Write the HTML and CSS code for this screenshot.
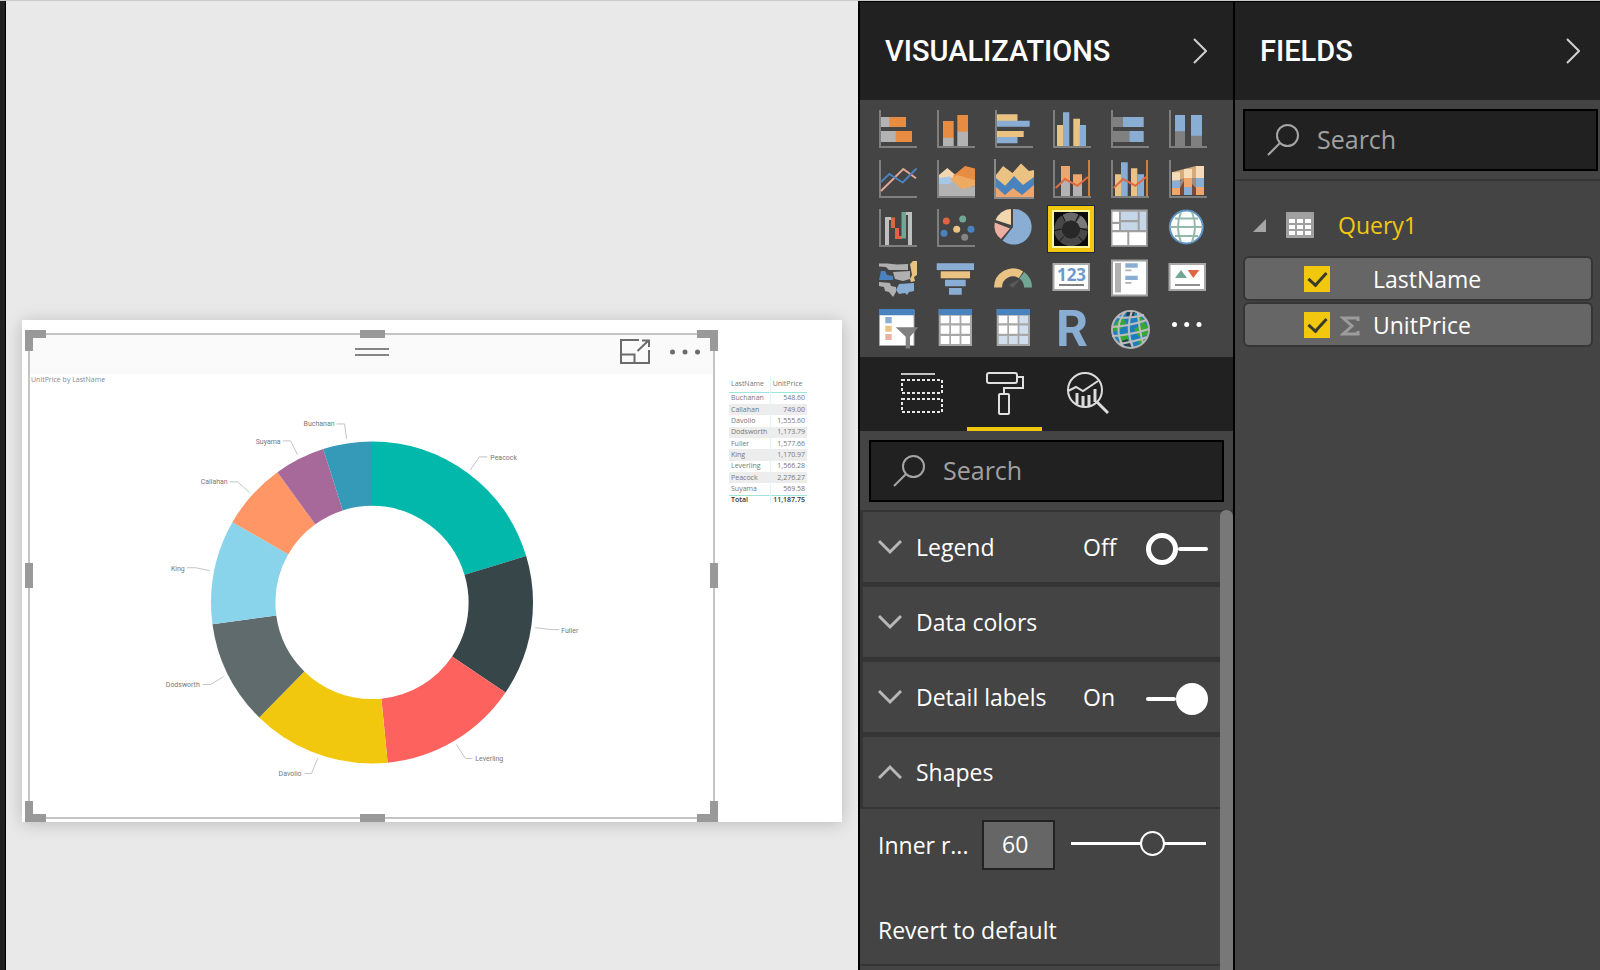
FILE: index.html
```html
<!DOCTYPE html>
<html lang="en">
<head>
<meta charset="utf-8">
<title>Report editor</title>
<link rel="stylesheet" href="styles.css">
</head>
<body>
<div class="app">
  <div class="rail"></div>

  <main class="canvas">
    <div class="sheet">
      <section class="visual">
        <i class="handle corner nw"></i><i class="handle corner ne"></i><i class="handle corner sw"></i><i class="handle corner se"></i>
        <i class="handle bar n"></i><i class="handle bar s"></i><i class="handle bar w"></i><i class="handle bar e"></i>
        <header class="visual-head">
          <button class="grip" aria-label="Move visual"></button>
          <div class="visual-tools">
            <button aria-label="Focus mode"><svg width="30" height="26" viewBox="0 0 30 26" fill="none" stroke="#6b6b6b" stroke-width="2"><path d="M19 1H1V24H29V11M1 15.500H14.500V24M17.500 12 28 2M22 1.500H29V8"/></svg></button>
            <button aria-label="More options"><svg width="30" height="6" viewBox="0 0 30 6" fill="#6b6b6b"><circle cx="2.500" cy="3" r="2.500"/><circle cx="15" cy="3" r="2.500"/><circle cx="27.500" cy="3" r="2.500"/></svg></button>
          </div>
        </header>
        <h3 class="visual-title">UnitPrice by LastName</h3>
        <svg class="donut" viewBox="0 0 684 430">
          <g class="slices" transform="rotate(-90 342.5 214.8)" fill="none" stroke-width="64.5">
            <circle cx="342.5" cy="214.8" r="129" pathLength="360" stroke="#01b8aa" stroke-dasharray="73.25 360"/>
            <circle cx="342.5" cy="214.8" r="129" pathLength="360" stroke="#374649" stroke-dasharray="50.77 360" stroke-dashoffset="-73.25"/>
            <circle cx="342.5" cy="214.8" r="129" pathLength="360" stroke="#fd625e" stroke-dasharray="50.4 360" stroke-dashoffset="-124.01"/>
            <circle cx="342.5" cy="214.8" r="129" pathLength="360" stroke="#f2c80f" stroke-dasharray="50.06 360" stroke-dashoffset="-174.41"/>
            <circle cx="342.5" cy="214.8" r="129" pathLength="360" stroke="#5f6b6d" stroke-dasharray="37.77 360" stroke-dashoffset="-224.47"/>
            <circle cx="342.5" cy="214.8" r="129" pathLength="360" stroke="#8ad4eb" stroke-dasharray="37.68 360" stroke-dashoffset="-262.24"/>
            <circle cx="342.5" cy="214.8" r="129" pathLength="360" stroke="#fe9666" stroke-dasharray="24.1 360" stroke-dashoffset="-299.92"/>
            <circle cx="342.5" cy="214.8" r="129" pathLength="360" stroke="#a66999" stroke-dasharray="18.33 360" stroke-dashoffset="-324.02"/>
            <circle cx="342.5" cy="214.8" r="129" pathLength="360" stroke="#3599b8" stroke-dasharray="17.65 360" stroke-dashoffset="-342.35"/>
          </g>
          <path class="leaders" d="M307 36H315L317 51M253 53H261L268 67M200 94H208L220 105M157 180H166L180 183M173 297H181L194 289M275 386H282L288 371M443 371H436L427 357M530 242H522L506 240M458 69H450L441 82"/>
          <g class="labels">
            <text x="461" y="72">Peacock</text><text x="532" y="245">Fuller</text><text x="446" y="374">Leverling</text>
            <g text-anchor="end"><text x="305" y="38">Buchanan</text><text x="251" y="56">Suyama</text><text x="198" y="96">Callahan</text><text x="155" y="183">King</text><text x="170" y="299">Dodsworth</text><text x="272" y="389">Davolio</text></g>
          </g>
        </svg>
      </section>
      <table class="data">
        <thead><tr><th>LastName</th><th>UnitPrice</th></tr></thead>
        <tbody>
          <tr><td>Buchanan</td><td>548.60</td></tr>
          <tr><td>Callahan</td><td>749.00</td></tr>
          <tr><td>Davolio</td><td>1,555.60</td></tr>
          <tr><td>Dodsworth</td><td>1,173.79</td></tr>
          <tr><td>Fuller</td><td>1,577.66</td></tr>
          <tr><td>King</td><td>1,170.97</td></tr>
          <tr><td>Leverling</td><td>1,566.28</td></tr>
          <tr><td>Peacock</td><td>2,276.27</td></tr>
          <tr><td>Suyama</td><td>569.58</td></tr>
        </tbody>
        <tfoot><tr><td>Total</td><td>11,187.75</td></tr></tfoot>
      </table>
    </div>
  </main>

  <aside class="pane">
    <header class="pane-head">
      <h2>VISUALIZATIONS</h2>
      <button aria-label="Collapse visualizations"><svg width="14" height="26" viewBox="0 0 14 26"><path d="M1 1 13 13 1 25" fill="none" stroke="#d0d0d0" stroke-width="2"/></svg></button>
    </header>

    <div class="gallery">
      <button aria-label="Stacked bar chart"><svg viewBox="0 0 40 40"><path class="axis" d="M3 1V38H40"/><path fill="#b3b3b3" d="M4 8h9v10H4zM4 22h15v11H4z"/><path fill="#e78c41" d="M12.300 8H29V18H12.300zM18.700 22H35V33H18.700z"/></svg></button>
      <button aria-label="Stacked column chart"><svg viewBox="0 0 40 40"><path class="axis" d="M3 1V38H40"/><path fill="#e78c41" d="M8 12h10.700v17H8zM22.300 6H33V23H22.300z"/><path fill="#b3b3b3" d="M8 28.700h10.700V37H8zM22.300 22.700H33V37H22.300z"/></svg></button>
      <button aria-label="Clustered bar chart"><svg viewBox="0 0 40 40"><path class="axis" d="M3 1V38H40"/><path fill="#eac282" d="M4 5.300H24.500V12H4zM4 22H30.700V28H4z"/><path fill="#8aadd3" d="M4 11.700H36.700V17.700H4zM4 28H24.500V34.300H4z"/></svg></button>
      <button aria-label="Clustered column chart"><svg viewBox="0 0 40 40"><path class="axis" d="M3 1V38H40"/><path fill="#eac282" d="M6 16h6V37H6zM22.300 9.700H29V37H22.300z"/><path fill="#8aadd3" d="M12 3.300h6.300V37H12zM28.700 16H35V37H28.700z"/></svg></button>
      <button aria-label="100% stacked bar chart"><svg viewBox="0 0 40 40"><path class="axis" d="M3 1V38H40"/><path fill="#808080" d="M4 8H14V18H4zM4 22H20.300V33H4z"/><path fill="#8aadd3" d="M14 8H34.700V18H14zM20.300 22H34.700V33H20.300z"/></svg></button>
      <button aria-label="100% stacked column chart"><svg viewBox="0 0 40 40"><path class="axis" d="M3 1V38H40"/><path fill="#808080" d="M8 22H18V37H8zM24 26H35V37H24z"/><path fill="#8aadd3" d="M8 6H18V22.300H8zM24 6H35V26.700H24z"/></svg></button>

      <button aria-label="Line chart"><svg viewBox="0 0 40 40"><path class="axis" d="M3 1V38H40"/><path fill="none" stroke="#e2a797" stroke-width="2" d="M4 32 26.300 10 39 19.300"/><path fill="none" stroke="#4a82bd" stroke-width="2" d="M4 23 12.300 15 25.700 23.500 39.500 9.500"/></svg></button>
      <button aria-label="Area chart"><svg viewBox="0 0 40 40"><path class="axis" d="M3 1V38H40"/><path fill="#f0d7b0" d="M4 16 12.300 9 24 19 20 26H4z"/><path fill="#a5c8e8" d="M4 19 15 17.500 22 24 4 26z"/><path fill="#b3b3b3" d="M4 25H14L20 20 27 29 40 27V37H4z"/><path fill="#e78c41" d="M18 17 30 7 40 9.500V22L27 30z"/><path fill="#eeaa63" d="M15 20 22 16 40 21V27L27 30z"/></svg></button>
      <button aria-label="Stacked area chart"><svg viewBox="0 0 40 40"><path fill="none" stroke="#8a8a8a" stroke-width="2" d="M2 0V39H41"/><path fill="#eac282" d="M3 16 10 7 19.500 14 28 4.500 36 12 41 11V24L30 27H12L3 20z"/><path fill="#4a82bd" d="M3 19 12 27 21 17 30 26 41 18V30L30 36H12L3 30z"/><path fill="#eea66d" d="M3 28 12 36 20 29 29 36 41 26V38H3z"/></svg></button>
      <button aria-label="Line and stacked column chart"><svg viewBox="0 0 40 40"><path class="axis" d="M3 1V38H40"/><path fill="#eea66d" d="M10 7h9V25h-9zM22 15.300h9V28h-9z"/><path fill="#b3b3b3" d="M10 24l5-3 4 2V37h-9zM22 26l5 2 4-3V37h-9z"/><path stroke="#cd7f3c" stroke-width="2" d="M38 1V37"/><path fill="none" stroke="#df6c42" stroke-width="2" d="M4.700 29 14 20 26.300 26.700 37 18"/></svg></button>
      <button aria-label="Line and clustered column chart"><svg viewBox="0 0 40 40"><path class="axis" d="M3 1V38H40"/><path fill="#eac282" d="M6 15.300h6V37H6zM22 9.300h6.300V37H22z"/><path fill="#8aadd3" d="M12 3.300h6.700V37H12zM28.300 15.300H35V37H28.300z"/><path stroke="#cd7f3c" stroke-width="2" d="M38 1V37"/><path fill="none" stroke="#df6c42" stroke-width="2" d="M4.700 29 14 20 26.300 26.700 37 18"/></svg></button>
      <button aria-label="Ribbon chart"><svg viewBox="0 0 40 40"><path class="axis" d="M3 1V38H40"/><path fill="#d6ab7c" d="M5 13.300 17 10 29 7h8V19H25L5 22z"/><path fill="#9a8a86" d="M13 22 17 19h12v9l-4 8H13z"/><path fill="#7a4a38" d="M13 29 17 22v14h-4zM25 25l4 4v7h-4z"/><path fill="#f5dcb8" d="M5 13.300h8v8.400H5zM17 10h8v9h-8zM29 7h8v12h-8z"/><path fill="#8aadd3" d="M5 21.700h8V29H5zM17 28h8v8h-8zM29 19h8v9h-8z"/><path fill="#eea66d" d="M5 29h8v7H5zM17 19h8v9h-8zM29 28h8v8h-8z"/></svg></button>

      <button aria-label="Waterfall chart"><svg viewBox="0 0 40 40"><path class="axis" d="M3 0V37H40"/><path fill="#c0c0c0" d="M8 8h6v3h-2V36H8zM29 3h6V36h-4V6h-2z"/><path fill="#df6444" d="M14 8.500h4V19h4v8h3v3h-7V19h-4z"/><path fill="#71a695" d="M24.500 3H29V29.500H24.500z"/></svg></button>
      <button aria-label="Scatter chart"><svg viewBox="0 0 40 40"><path class="axis" d="M3 0V37H40"/><circle cx="11.300" cy="12" r="3.500" fill="#df6444"/><circle cx="27.700" cy="10" r="3.500" fill="#71a695"/><circle cx="21.700" cy="20.300" r="3.500" fill="#eac282"/><circle cx="9" cy="24.300" r="3.500" fill="#4a82bd"/><circle cx="36" cy="20.300" r="3.500" fill="#4a82bd"/><circle cx="29.700" cy="28.300" r="3.500" fill="#858585"/></svg></button>
      <button aria-label="Pie chart"><svg viewBox="0 0 40 40"><path fill="#8aadd3" d="M20 0A17.800 17.800 0 1 1 9.500 31.500L20 18z"/><path fill="#f0d7b0" d="M18 0V16L2.500 11A17 17 0 0 1 18 0z"/><path fill="#ecb0a2" d="M1.700 13.500 17 19.500 8 30A17 17 0 0 1 1.700 13.500z"/></svg></button>
      <button class="selected" aria-label="Donut chart" aria-pressed="true"><svg viewBox="2 1 36 36"><path fill="#0c0c0e" d="M2 1H38V38H2z"/><circle cx="20" cy="19.500" r="13.500" fill="none" stroke="#484848" stroke-width="8.500"/><path fill="none" stroke="#686868" stroke-width="8.500" d="M12.500 8.200A13.500 13.500 0 0 1 26 7.400"/><path fill="none" stroke="#7a7a7a" stroke-width="8.500" d="M28 8.500A13.500 13.500 0 0 1 33.400 18"/><circle cx="20" cy="19.500" r="9.500" fill="#282828"/><path stroke="#0c0c0e" d="M10 3 14 11M29 3 25 11M29 18 39 21M28 27 34 34M12 27 6 34M10 19 1 21"/></svg></button>
      <button aria-label="Treemap"><svg viewBox="0 0 40 40"><path fill="#a0a0a0" d="M2 .5H38.700V37.700H2z"/><path fill="#fff" d="M3.500 2.700H10V12.700H3.500zM3.500 15H10V21H3.500zM3.500 23.300H18.300V36H3.500zM20.300 23.300H37V36H20.300z"/><path fill="#c5d6e9" d="M12 2.700H28.700V11H12zM12 13.300H28.700V21H12zM30.700 2.700H37V21H30.700z"/></svg></button>
      <button aria-label="Map"><svg viewBox="0 0 40 40"><circle cx="19.300" cy="18" r="16.500" fill="#fff" stroke="#5c92c4" stroke-width="2"/><path fill="none" stroke="#94b9ab" stroke-width="2" d="M3 18H36M8 9.500H31M8 27H31M14 3Q8 18 14 33M25 3Q31 18 25 33"/></svg></button>

      <button aria-label="Filled map"><svg viewBox="0 0 40 40"><path fill="#b0b0b0" d="M2 4.500H10L20 5.500 31 5V11H12L9 8 2 7.500zM16 13 33 12V20L26 22 18 20zM2 23 13 24 14 27 19 28V33L16 38 12 33 8 32 7 28 2 27z"/><path fill="#4a82bd" d="M2 21 4 12 8 12 10 16 16 17V21z"/><path fill="#eac282" d="M33 5 36 2 40 2V16L37 18 38 22 34 23 33 20 35 16z"/><path fill="#8aadd3" d="M22 25 37 24V32L32 33 30 36 28 34 22 35 19 31z"/></svg></button>
      <button aria-label="Funnel"><svg viewBox="0 0 40 40"><path fill="#8aadd3" d="M1.700 4.300H39V11H1.700zM10 20.700H30.700V27.300H10zM14 29H26.700V35.700H14z"/><path fill="#eac282" d="M5.700 12.300H35V19.300H5.700z"/></svg></button>
      <button aria-label="Gauge"><svg viewBox="0 0 40 40"><g fill="none" stroke-width="8"><path stroke="#eac282" d="M5 28.500A15 15 0 0 1 28 15.800"/><path stroke="#71a695" d="M28.800 16.300A15 15 0 0 1 35 28.500"/></g><path fill="#5a5a5a" d="M16 26 27 20 20 29z"/></svg></button>
      <button aria-label="Card"><svg viewBox="0 0 40 40"><path fill="#fff" stroke="#a8a8a8" stroke-width="2" d="M2.500 5H38V31H2.500z"/><text class="card-num" x="20.500" y="21.500">123</text><path stroke="#808080" stroke-width="2" d="M8 26H33"/></svg></button>
      <button aria-label="Multi-row card"><svg viewBox="0 0 40 40"><path fill="#fff" stroke="#a0a0a0" stroke-width="2" d="M3 1.500H38V36.500H3z"/><path fill="#b0b0b0" d="M6 4h6V33.500H6zM16.300 10.500h6.200v1.800h-6.200zM16.300 23h6.200v1.800h-6.200z"/><path fill="#8aadd3" d="M16.300 4.300H28.700V8.700H16.300zM16.300 16.700H28.700V21H16.300z"/></svg></button>
      <button aria-label="KPI"><svg viewBox="0 0 40 40"><path fill="#fff" stroke="#a8a8a8" stroke-width="2" d="M2.500 5H38V31H2.500z"/><path fill="#71a695" d="M8 19 14 11 20 19z"/><path fill="#df6444" d="M20.700 11H32.300L26.300 19z"/><path stroke="#909090" stroke-width="2" d="M8 26H33"/></svg></button>

      <button aria-label="Slicer"><svg viewBox="0 0 40 40"><path fill="#fff" stroke="#a8a8a8" d="M2.500 1H37V36.500H2.500z"/><path fill="#4a82bd" d="M2 0H37.300V6.300H2z"/><path fill="#8aadd3" d="M8.300 8h6.400v6.300H8.300z"/><path fill="#eac282" d="M8.300 16.700h6.400v6H8.300z"/><path fill="#ecb0a2" d="M8.300 25h6.400v6H8.300z"/><path fill="#808080" d="M18.700 18.300H41.300L33 27.700V39.500H28.700V27.700z"/></svg></button>
      <button aria-label="Table"><svg viewBox="0 0 40 40"><path fill="#a8a8a8" d="M3.700 0H37V37H3.700z"/><path fill="#4a82bd" d="M3.700 0H37V6H3.700z"/><path fill="#fff" d="M5.700 6.700h8.600v7.600H5.700zM16 6.700h8.600v7.600H16zM26.400 6.700H35v7.600h-8.600zM5.700 16.500h8.600v8.200H5.700zM16 16.500h8.600v8.200H16zM26.400 16.500H35v8.200h-8.600zM5.700 27h8.600v8H5.700zM16 27h8.600v8H16zM26.400 27H35v8h-8.600z"/></svg></button>
      <button aria-label="Matrix"><svg viewBox="0 0 40 40"><path fill="#a8a8a8" d="M3.700 0H37V37H3.700z"/><path fill="#4a82bd" d="M3.700 0H37V6H3.700z"/><path fill="#fff" d="M5.700 6.700h8.600v7.600H5.700zM16 6.700h8.600v7.600H16zM5.700 16.500h8.600v8.200H5.700zM16 16.500h8.600v8.200H16z"/><path fill="#d0deee" d="M26.400 6.700H35v7.600h-8.600zM26.400 16.500H35v8.200h-8.600zM5.700 27h8.600v8H5.700zM16 27h8.600v8H16zM26.400 27H35v8h-8.600z"/></svg></button>
      <button aria-label="R script visual"><svg viewBox="0 0 40 40"><text class="r-letter" x="21" y="37">R</text></svg></button>
      <button aria-label="ArcGIS map"><svg viewBox="0 0 40 40"><circle cx="21.500" cy="20.500" r="18.500" fill="#1e7fc0" stroke="#b4b4b4" stroke-width="2"/><path fill="#38a832" d="M6 14 14 8 17 14 10 22H4zM26 6 32 8 38 17V26L30 28 25 20 32 16zM8 27 18 24 20 31 14 35zM29 30 36 30 30 36z"/><path fill="#2c3c48" d="M18 3H26L24 8 17 7zM13 32 18 30 24 38 16 37z"/><g fill="none" stroke="#bdbdbd" stroke-width="2"><path d="M8 8Q20 10 35 6M3 18Q20 17 38 11M3 27Q22 26 40 20M10 35Q28 32 38 28M16 3Q4 18 14 38M23 2Q16 20 24 39M29 4Q30 20 34 34"/></g></svg></button>
      <button aria-label="More visuals"><svg viewBox="0 0 40 40" fill="#fff"><circle cx="7.500" cy="15.500" r="2.500"/><circle cx="19.700" cy="15.500" r="2.500"/><circle cx="32" cy="15.500" r="2.500"/></svg></button>
    </div>

    <nav class="tabs">
      <button aria-label="Fields"><svg width="44" height="42" viewBox="0 0 44 42" fill="none" stroke="#e8e8e8" stroke-width="2"><path stroke="#c4c4c4" d="M1 1H35"/><path stroke-dasharray="3 2" d="M2 7H42V20H2zM2 26H42V39H2z"/></svg></button>
      <button class="active" aria-label="Format"><svg width="40" height="44" viewBox="0 0 40 44" fill="none" stroke="#e0e0e0" stroke-width="2"><rect x="2" y="1" width="30" height="10" rx="2"/><path d="M32 5H38V16H19V22"/><rect x="14" y="22" width="10" height="20" rx="1"/></svg></button>
      <button aria-label="Analytics"><svg width="44" height="44" viewBox="0 0 44 44" fill="none" stroke="#dcdcdc" stroke-width="2"><circle cx="19" cy="18" r="17"/><path d="M2 19 10 15 17 19 32 9"/><path stroke-width="3" d="M11 21V32M17 24V34M23 23V34M29 17V30"/><path stroke-width="3" d="M31 30 42 41"/></svg></button>
    </nav>

    <label class="search">
      <svg width="32" height="32" viewBox="0 0 32 32" fill="none" stroke="#a6a6a6" stroke-width="2"><circle cx="20.500" cy="11.500" r="10.500"/><path d="M13 19 1 31"/></svg>
      <input type="text" placeholder="Search" aria-label="Search format options">
    </label>

    <div class="options">
      <div class="cards">
        <div class="card"><button class="card-name"><svg width="24" height="16" viewBox="0 0 24 16"><path d="M1 2 12 13 23 2" fill="none" stroke="#b8b8b8" stroke-width="3"/></svg>Legend</button><label class="switch"><span>Off</span><input type="checkbox" aria-label="Legend"></label></div>
        <div class="card"><button class="card-name"><svg width="24" height="16" viewBox="0 0 24 16"><path d="M1 2 12 13 23 2" fill="none" stroke="#b8b8b8" stroke-width="3"/></svg>Data colors</button></div>
        <div class="card"><button class="card-name"><svg width="24" height="16" viewBox="0 0 24 16"><path d="M1 2 12 13 23 2" fill="none" stroke="#b8b8b8" stroke-width="3"/></svg>Detail labels</button><label class="switch"><span>On</span><input type="checkbox" aria-label="Detail labels" checked></label></div>
        <div class="card"><button class="card-name"><svg width="24" height="16" viewBox="0 0 24 16"><path d="M1 14 12 3 23 14" fill="none" stroke="#b8b8b8" stroke-width="3"/></svg>Shapes</button></div>
      </div>
      <div class="shape-body">
        <div class="radius">
          <label for="radius">Inner r...</label>
          <input id="radius" class="number" type="text" value="60">
          <input class="slider" type="range" min="0" max="100" value="63" aria-label="Inner radius">
        </div>
        <button class="revert">Revert to default</button>
      </div>
      <div class="scrollbar"></div>
    </div>
  </aside>

  <aside class="pane fields">
    <header class="pane-head">
      <h2>FIELDS</h2>
      <button aria-label="Collapse fields"><svg width="14" height="26" viewBox="0 0 14 26"><path d="M1 1 13 13 1 25" fill="none" stroke="#d0d0d0" stroke-width="2"/></svg></button>
    </header>
    <label class="search">
      <svg width="32" height="32" viewBox="0 0 32 32" fill="none" stroke="#a6a6a6" stroke-width="2"><circle cx="20.500" cy="11.500" r="10.500"/><path d="M13 19 1 31"/></svg>
      <input type="text" placeholder="Search" aria-label="Search fields">
    </label>
    <div class="tree">
      <button class="query">
        <svg width="13" height="13" viewBox="0 0 13 13"><path d="M13 0V13H0z" fill="#a6a6a6"/></svg>
        <svg width="28" height="26" viewBox="0 0 28 26"><path fill="#a0a0a0" d="M0 0H28V26H0z"/><path fill="#fff" d="M3 7h6v4H3zM11 7h6v4h-6zM19 7h6v4h-6zM3 13h6v4H3zM11 13h6v4h-6zM19 13h6v4h-6zM3 19h6v4H3zM11 19h6v4h-6zM19 19h6v4h-6z"/></svg>
        <span>Query1</span>
      </button>
      <label class="field"><input type="checkbox" checked><span class="kind"></span>LastName</label>
      <label class="field"><input type="checkbox" checked><span class="kind"><svg width="20" height="20" viewBox="0 0 20 20"><path fill="none" stroke="#9c9c9c" stroke-width="3" d="M18 5V2H3L12 10 3 18H18V15"/></svg></span>UnitPrice</label>
    </div>
  </aside>
</div>
</body>
</html>
```
FILE: styles.css
```css
*, ::before, ::after { box-sizing: border-box; }
body {
  margin: 0;
  background: #e9e9e9;
  font-family: "Open Sans", "Noto Sans", sans-serif;
  color: #fff;
}
button {
  display: flex;
  align-items: center;
  justify-content: center;
  padding: 0;
  border: 0;
  background: none;
  color: inherit;
  font: inherit;
}
svg { display: block; }
input { font: inherit; color: inherit; margin: 0; }

.app {
  display: grid;
  grid-template-columns: 6px 1fr 377px 365px;
  height: 100vh;
  border-top: 1px solid #c8ccc8;
  overflow: hidden;
}
.rail { background: #212121; border-right: 1px solid #000; }

/* report canvas */
.canvas { padding: 319px 16px 16px; min-width: 0; }
.sheet {
  display: grid;
  grid-template-columns: minmax(0, 687fr) minmax(0, 127fr);
  padding: 13px 0 3px 6px;
  background: #fff;
  box-shadow: 0 2px 16px rgba(0, 0, 0, .2);
}
.visual {
  position: relative;
  display: flex;
  flex-direction: column;
  border: 2px solid #c4c4c4;
}
.visual-head {
  display: grid;
  grid-template-columns: 1fr auto 1fr;
  height: 39px;
  background: #fafafa;
}
.grip {
  grid-column: 2;
  width: 34px;
  height: 8px;
  margin-top: 13px;
  border-top: 2px solid #858585;
  border-bottom: 2px solid #858585;
}
.visual-tools { display: flex; justify-content: end; align-items: center; gap: 20px; height: 33px; padding-right: 13px; }
.visual-title { margin: 0; height: 14px; padding-left: 1px; font-size: 7px; line-height: 12px; font-weight: 400; color: #888; }
.donut { width: 100%; height: auto; }
.leaders { fill: none; stroke: #c4c4c4; stroke-width: 1; }
.labels { font-family: Roboto, sans-serif; font-size: 7px; fill: #777; }
.handle { position: absolute; background: #999; }
.corner { width: 21px; height: 21px; background: none; border: 0 solid #999; }
.nw { top: -5px; left: -5px; border-width: 8px 0 0 8px; }
.ne { top: -5px; right: -5px; border-width: 8px 8px 0 0; }
.sw { bottom: -5px; left: -5px; border-width: 0 0 8px 8px; }
.se { bottom: -5px; right: -5px; border-width: 0 8px 8px 0; }
.n, .s { width: 25px; height: 8px; left: calc(50% - 12px); }
.w, .e { width: 8px; height: 25px; top: calc(50% - 13px); }
.n { top: -5px; }
.s { bottom: -5px; }
.w { left: -5px; }
.e { right: -5px; }

.data {
  width: 78px;
  height: 128px;
  margin: 43px 0 0 14px;
  border-collapse: collapse;
  font-size: 7px;
  line-height: 8px;
  color: #777;
}
.data th { height: 16px; font-weight: 400; text-align: left; }
.data th, .data td { padding: 0 2px; }
.data td + td { text-align: right; }
.data tr > :first-child { border-right: 1px solid #e0f6f4; }
.data thead { border-bottom: 1px solid #9fe3dc; }
.data tbody tr:nth-child(even) { background: #ededed; }
.data tfoot { border-top: 1px solid #9fe3dc; font-weight: 600; color: #333; }

/* side panes */
.pane {
  display: flex;
  flex-direction: column;
  min-height: 0;
  border: solid #000;
  border-width: 1px 2px 0;
  background: #444;
  font-size: 23px;
  line-height: 32px;
}
.fields { border-width: 1px 0 0; }
.pane-head {
  display: flex;
  flex: none;
  align-items: center;
  justify-content: space-between;
  height: 98px;
  padding: 0 26px 0 25px;
  background: #212121;
}
.fields .pane-head { padding-right: 20px; }
.pane-head h2 { margin: 0; font: 500 29px/34px Roboto, sans-serif; }

.gallery {
  display: grid;
  grid-template-columns: repeat(6, 58px);
  grid-auto-rows: 50px;
  place-items: center;
  padding: 4px 0 3px 8px;
}
.gallery button { width: 46px; height: 46px; }
.gallery svg { width: 40px; height: 40px; overflow: visible; flex: none; }
.gallery .selected { border: 4px solid #f2c80f; outline: 1px solid #1d2a40; background: #fdf6a0; }
.gallery .selected svg { width: 34px; height: 34px; overflow: hidden; }
.axis { fill: none; stroke: #7f7f7f; stroke-width: 2; }
.card-num { font: 700 17px "Open Sans", sans-serif; fill: #6d9acb; text-anchor: middle; }
.r-letter { font: 700 50px Roboto, sans-serif; fill: #8aadd3; text-anchor: middle; }

.tabs { display: flex; flex: none; gap: 8px; height: 74px; padding-left: 24px; background: #212121; }
.tabs button { width: 75px; border: solid transparent; border-width: 0 0 4px; padding-top: 4px; }
.tabs .active { border-color: #f2c80f; }

.search {
  display: flex;
  flex: none;
  align-items: center;
  gap: 18px;
  height: 62px;
  margin: 9px 9px 8px;
  padding: 0 22px;
  border: 2px solid #000;
  background: #212121;
}
.search input {
  flex: 1;
  min-width: 0;
  padding: 0 0 2px;
  border: 0;
  outline: 0;
  background: none;
  font-size: 25px;
}
.search input::placeholder { color: #a0a0a0; opacity: 1; }

.options { position: relative; flex: 1; min-height: 0; overflow: hidden; }
.cards { display: grid; gap: 5px; padding: 2px 3px; background: #353535; }
.card {
  display: flex;
  align-items: center;
  justify-content: space-between;
  height: 70px;
  padding: 0 22px 0 15px;
  background: #444;
}
.card-name { gap: 14px; }
.switch { display: flex; align-items: center; justify-content: space-between; width: 125px; }
.switch input {
  appearance: none;
  display: flex;
  align-items: center;
  width: 62px;
  height: 32px;
  margin-top: 4px;
}
.switch input::before { content: ""; width: 32px; height: 32px; border: 5px solid #fff; border-radius: 50%; }
.switch input::after { content: ""; flex: 1; height: 4px; border-radius: 2px; background: #fff; }
.switch input:checked { flex-direction: row-reverse; }
.switch input:checked::before { background: #fff; }

.shape-body { padding: 11px 27px 18px 18px; border-bottom: 2px solid #353535; }
.radius { display: flex; align-items: center; }
.radius label { width: 104px; }
.number {
  width: 73px;
  height: 50px;
  padding: 0 0 2px 18px;
  border: 2px solid #222;
  background: #666;
}
.slider { appearance: none; flex: 1; min-width: 0; height: 26px; margin: 0 0 4px 16px; background: linear-gradient(#fff, #fff) center / 100% 3px no-repeat; }
.slider::-webkit-slider-thumb {
  appearance: none;
  width: 25px;
  height: 25px;
  border: 2px solid #fff;
  border-radius: 50%;
  background: #444;
}
.revert { margin-top: 44px; }
.scrollbar {
  position: absolute;
  top: 0;
  right: 0;
  bottom: 0;
  width: 13px;
  border-radius: 6px 6px 0 0;
  background: #787878;
}

/* fields list */
.fields .search { margin: 9px 2px 8px 8px; }
.tree { padding: 28px 7px 0 8px; border-top: 2px solid #353535; }
.query { gap: 20px; margin: 0 0 15px 10px; color: #f2c80f; }
.query span { margin-left: 4px; }
.field {
  display: flex;
  align-items: center;
  height: 45px;
  margin-bottom: 1px;
  padding-left: 59px;
  border: 2px solid #353535;
  border-radius: 6px;
  background: #666;
}
.field input {
  appearance: none;
  position: relative;
  width: 26px;
  height: 26px;
  background: #f2c80f;
}
.field input:checked::after {
  content: "";
  position: absolute;
  left: 8px;
  top: 2px;
  width: 11px;
  height: 18px;
  border: solid #3a3a2a;
  border-width: 0 3px 3px 0;
  transform: rotate(42deg);
}
.kind { width: 43px; padding: 2px 0 0 10px; }
```
